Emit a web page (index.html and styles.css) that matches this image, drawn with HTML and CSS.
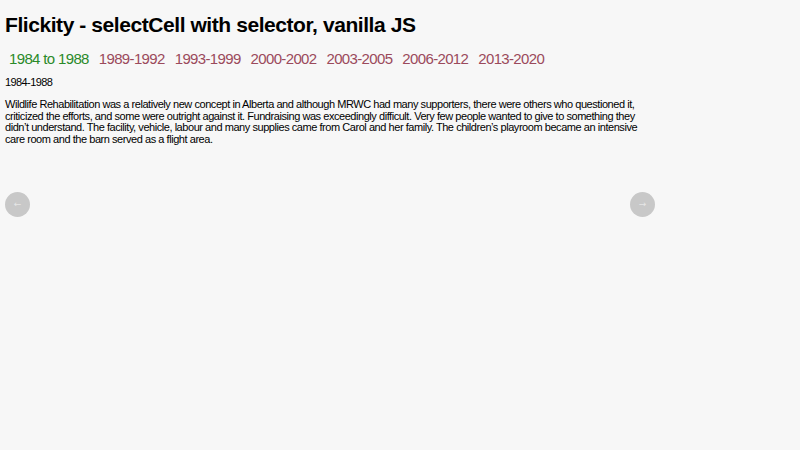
FILE: index.html
```html
<!DOCTYPE html>
<html>
<head>
<meta charset="utf-8">
<link rel="stylesheet" href="styles.css">
</head>
<body>
<div class="page">
  <h1 class="title">Flickity - selectCell with selector, vanilla JS</h1>
  <div class="nav">
    <span class="nav-item is-selected">1984 to 1988</span>
    <span class="nav-item">1989-1992</span>
    <span class="nav-item">1993-1999</span>
    <span class="nav-item">2000-2002</span>
    <span class="nav-item">2003-2005</span>
    <span class="nav-item">2006-2012</span>
    <span class="nav-item">2013-2020</span>
  </div>
  <div class="carousel">
    <div class="cell">
      <div class="cell-title">1984-1988</div>
      <p class="cell-text">Wildlife Rehabilitation was a relatively new concept in Alberta and although MRWC had many supporters, there were others who questioned it, criticized the efforts, and some were outright against it. Fundraising was exceedingly difficult. Very few people wanted to give to something they didn’t understand. The facility, vehicle, labour and many supplies came from Carol and her family. The children’s playroom became an intensive care room and the barn served as a flight area.</p>
    </div>
    <button class="arrow prev">←</button>
    <button class="arrow next">→</button>
  </div>
</div>
</body>
</html>
```
FILE: styles.css
```css
html, body {
  margin: 0;
  background: #f7f7f7;
}
body {
  font-family: "Liberation Sans", Arial, sans-serif;
  color: #000;
}
.page {
  padding: 0 5px;
  width: 650px;
}
.title {
  font-size: 21px;
  letter-spacing: -0.43px;
  font-weight: bold;
  margin: 0;
  padding-top: 13px;
  line-height: 24px;
}
.nav {
  display: flex;
  margin-top: 12px;
  padding-left: 4px;
  gap: 10px;
  font-size: 15px;
  letter-spacing: -0.65px;
  line-height: 20px;
}
.nav-item {
  color: #9b4a5c;
}
.nav-item.is-selected {
  color: #2a8a2a;
}
.carousel {
  position: relative;
  height: 268px;
  margin-top: 6px;
}
.cell-title {
  font-size: 11px;
  letter-spacing: -0.6px;
  line-height: 14px;
}
.cell-text {
  font-size: 11px;
  letter-spacing: -0.45px;
  line-height: 11.7px;
  margin: 10px 0 0;
  width: 640px;
}
.arrow {
  position: absolute;
  top: 117px;
  width: 25px;
  height: 25px;
  border-radius: 50%;
  border: none;
  padding: 0;
  background: #c8c8c8;
  color: #e6e6e6;
  font-size: 9px;
  line-height: 25px;
  font-family: "DejaVu Sans", sans-serif;
}
.prev { left: 0; }
.next { right: 0; }
```
